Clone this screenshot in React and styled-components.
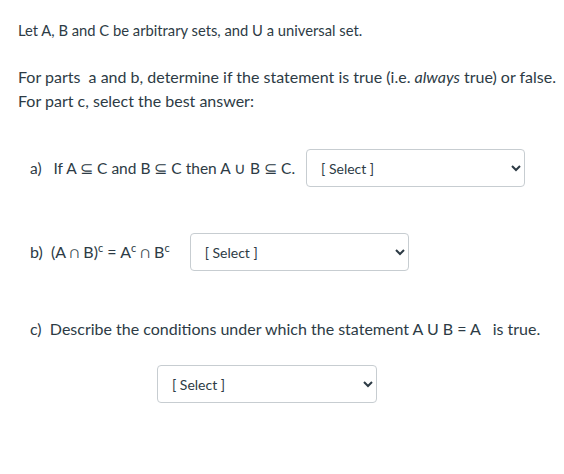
import React from 'react';
import styled, { createGlobalStyle } from 'styled-components';

const GlobalStyle = createGlobalStyle`
  body {
    margin: 0;
    background: #ffffff;
    font-family: Lato, "Open Sans", sans-serif;
    color: #2d3b45;
  }
`;

const Page = styled.div`
  padding: 18px 18px 0 18px;
  font-size: 16px;
  line-height: 24px;
`;

const Para = styled.p`
  margin: 0 0 ${(p) => p.$gap ?? 23}px 0;
  font-size: ${(p) => p.$size ?? 16}px;
  white-space: nowrap;
`;

const Row = styled.div`
  display: flex;
  align-items: center;
  padding-left: ${(p) => p.$indent ?? 12}px;
  margin-top: ${(p) => p.$top ?? 0}px;
`;

const Label = styled.span`
  white-space: pre;
  font-size: ${(p) => p.$size ?? 16}px;
`;

const Select = styled.select`
  appearance: auto;
  width: ${(p) => p.$width ?? 220}px;
  height: 38px;
  margin-left: ${(p) => p.$left ?? 10}px;
  padding: 0 0 0 10px;
  border: 1px solid #c7cdd1;
  border-radius: 4px;
  background: #ffffff;
  color: #2d3b45;
  font-family: Lato, "Open Sans", sans-serif;
  font-size: 14px;
`;

const Sup = styled.sup`
  font-size: 11px;
  line-height: 0;
  vertical-align: 6px;
`;

const Answer = ({ left, width }) => (
  <Select $left={left} $width={width} defaultValue="">
    <option value="">[ Select ]</option>
    <option value="true">True</option>
    <option value="false">False</option>
  </Select>
);

export default function App() {
  return (
    <Page>
      <GlobalStyle />
      <Para $size={14.75}>Let A, B and C be arbitrary sets, and U a universal set.</Para>
      <Para $gap={0}>
        For parts&nbsp; a and b, determine if the statement is true (i.e. <em>always</em> true) or false.
      </Para>
      <Para $gap={0}>For part c, select the best answer:</Para>

      <Row $top={36}>
        <Label $size={15.5}>a)   If A ⊆ C and B ⊆ C then A ∪ B ⊆ C.</Label>
        <Answer left={11} width={219} />
      </Row>

      <Row $top={46}>
        <Label>
          b)  (A ∩ B)<Sup>c</Sup> = A<Sup>c</Sup> ∩ B<Sup>c</Sup>
        </Label>
        <Answer left={20} width={219} />
      </Row>

      <Row $top={46}>
        <Label>c)  Describe the conditions under which the statement A U B = A   is true.</Label>
      </Row>

      <Row $top={24} $indent={139}>
        <Answer left={0} width={220} />
      </Row>
    </Page>
  );
}
